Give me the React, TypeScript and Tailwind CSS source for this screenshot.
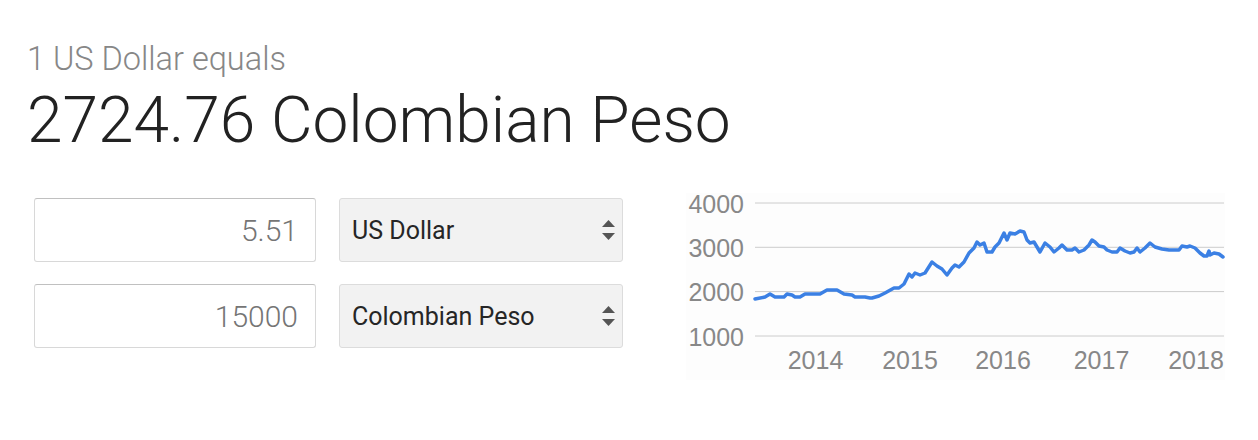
import React from 'react';

// ─── Chart data (screen coords of the reference, translated in the svg) ──────

const POINTS: [number, number][] = [
  [753, 299], [763, 297], [768, 294], [773, 297], [782, 297], [785, 294], [790, 295],
  [793, 297], [798, 297], [803, 294], [818, 294], [825, 290], [835, 290], [842, 294],
  [850, 295], [853, 297], [863, 297], [868, 298], [870, 298], [877, 296], [883, 293],
  [892, 288], [897, 288], [902, 284], [907, 274], [910, 277], [913, 273], [918, 275],
  [923, 273], [930, 262], [935, 266], [940, 269], [945, 275], [950, 268], [953, 265],
  [957, 267], [962, 262], [967, 253], [972, 248], [975, 242], [978, 245], [982, 243],
  [985, 252], [990, 252], [993, 247], [997, 243], [1002, 233], [1005, 240], [1008, 233],
  [1013, 234], [1018, 231], [1022, 232], [1025, 240], [1028, 243], [1032, 242],
  [1035, 247], [1038, 252], [1043, 243], [1048, 247], [1052, 252], [1057, 248],
  [1060, 245], [1065, 250], [1070, 250], [1073, 248], [1077, 252], [1082, 250],
  [1087, 245], [1090, 240], [1093, 242], [1097, 246], [1102, 247], [1105, 250],
  [1110, 252], [1115, 252], [1118, 248], [1123, 251], [1128, 253], [1132, 252],
  [1135, 248], [1138, 252], [1143, 248], [1148, 243], [1153, 247], [1160, 249],
  [1167, 250], [1177, 250], [1180, 246], [1185, 247], [1188, 246], [1193, 248],
  [1198, 253], [1202, 256], [1205, 256], [1207, 251], [1208, 255], [1212, 253],
  [1217, 254], [1221, 257],
];

const Y_TICKS = [
  { label: '4000', y: 10 },
  { label: '3000', y: 54.3 },
  { label: '2000', y: 98.6 },
  { label: '1000', y: 143 },
];

const X_TICKS = [
  { label: '2014', x: 129.5 },
  { label: '2015', x: 224 },
  { label: '2016', x: 317 },
  { label: '2017', x: 415.5 },
  { label: '2018', x: 510 },
];

function RateChart() {
  const d = POINTS.map(([x, y], i) => `${i ? 'L' : 'M'}${x} ${y}`).join(' ');
  return (
    <svg width="539" height="187" viewBox="0 0 539 187" className="bg-[#fdfdfd]">
      {Y_TICKS.map(t => (
        <g key={t.label}>
          <line x1="69" x2="538" y1={t.y} y2={t.y} stroke="#cccccc" strokeWidth="1" />
          <text
            x="58" y={t.y + 9.5} textAnchor="end" fill="#888888"
            fontSize="25" fontFamily="'Liberation Sans', Arial, sans-serif"
          >
            {t.label}
          </text>
        </g>
      ))}
      {X_TICKS.map(t => (
        <text
          key={t.label} x={t.x} y="176" textAnchor="middle" fill="#888888"
          fontSize="25" fontFamily="'Liberation Sans', Arial, sans-serif"
        >
          {t.label}
        </text>
      ))}
      <g transform="translate(-684,-193)">
        <path d={d} fill="none" stroke="#3b80e4" strokeWidth="3.5" strokeLinejoin="round" strokeLinecap="round" />
      </g>
    </svg>
  );
}

// ─── Select arrows ───────────────────────────────────────────────────────────

function SelectArrows() {
  return (
    <svg width="13" height="20" viewBox="0 0 13 20" fill="#555555" aria-hidden="true">
      <polygon points="6.5,0 13,7 0,7" />
      <polygon points="0,13 13,13 6.5,20" />
    </svg>
  );
}

// ─── Converter row ───────────────────────────────────────────────────────────

function ConverterRow({ amount, currency }: { amount: string; currency: string }) {
  return (
    <div className="flex gap-[23px]">
      <input
        readOnly
        value={amount}
        className="w-[282px] h-[64px] rounded-[3px] border border-[#d8d8d8] border-t-[#c0c0c0] bg-white pr-[17px] text-right text-[30px] font-light text-[#757575] outline-none"
      />
      <div className="w-[284px] h-[64px] rounded-[3px] border border-[#dcdcdc] bg-[#f2f2f2] flex items-center justify-between pl-[12px] pr-[7px]">
        <span className="text-[25px] text-[#262626] pt-[2px]">{currency}</span>
        <SelectArrows />
      </div>
    </div>
  );
}

export default function App() {
  return (
    <div className="w-[1258px] h-[440px] bg-white font-['Roboto',sans-serif]">
      <div className="pl-[27px] pt-[41px]">
        <p className="text-[32.5px] leading-[37px] font-light text-[#878787]">1 US Dollar equals</p>
        <p className="mt-[11px] text-[64px] leading-[64px] font-light text-[#222222]">2724.76 Colombian Peso</p>
      </div>

      <div className="flex pl-[34px] mt-[40px]">
        <div className="flex flex-col gap-[22px] pt-[5px]">
          <ConverterRow amount="5.51" currency="US Dollar" />
          <ConverterRow amount="15000" currency="Colombian Peso" />
        </div>
        <div className="ml-[63px]">
          <RateChart />
        </div>
      </div>
    </div>
  );
}
